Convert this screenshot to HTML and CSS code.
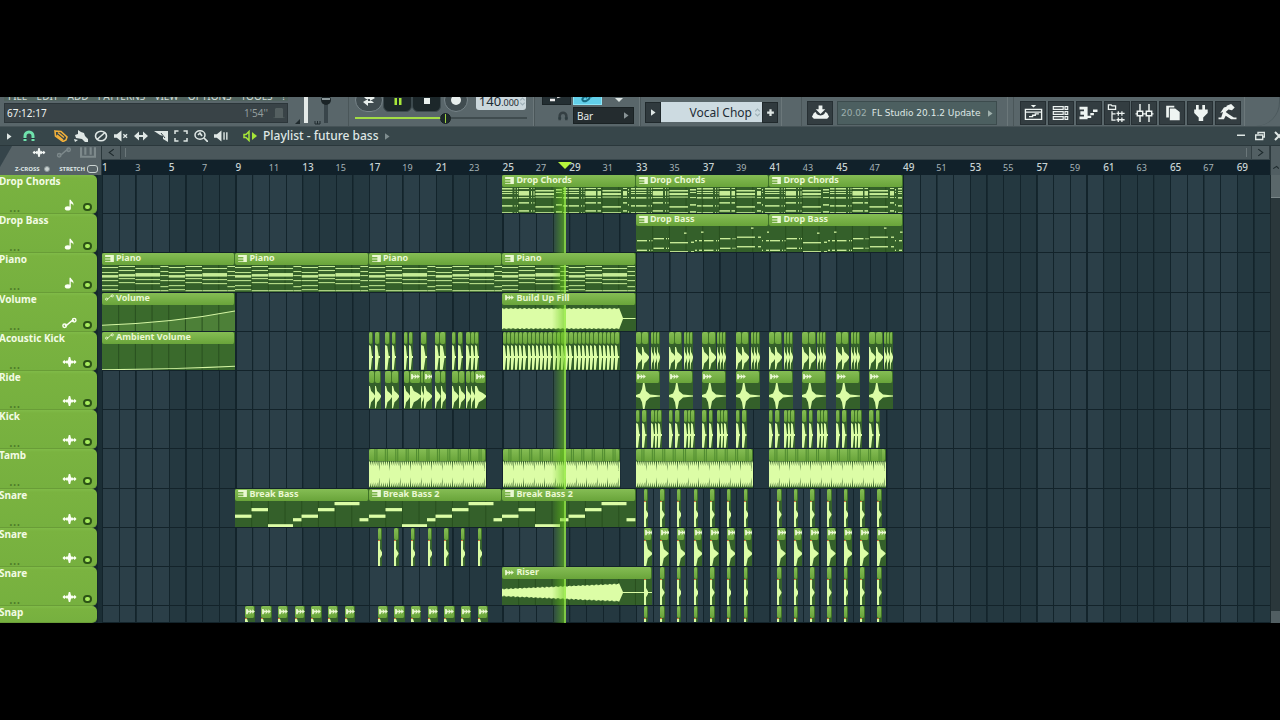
FILE: index.html
```html
<!DOCTYPE html>
<html lang="en">
<head>
<meta charset="utf-8">
<title>Playlist - future bass</title>
<link rel="stylesheet" href="styles.css">
</head>
<body>
<svg class="defs" aria-hidden="true">
  <symbol id="i-note" viewBox="0 0 14 14"><ellipse cx="5" cy="11" rx="3.500" ry="2.400"/><path d="M7 11V1h1.500c.3 2 4 3 3 7-.3-1.700-1.500-2.600-3-2.800V11z"/></symbol>
  <symbol id="i-wave" viewBox="0 0 14 12"><path d="M0 6l1.800-2L3.300 5.500 4.500 4l.8 1L6.300 1h1.400l1 4 .8-1 1.200 1.500L12.200 4 14 6l-1.800 2-1.500-1.500L9.500 8l-.8-1-1 4H6.300l-1-4-.8 1-1.200-1.500L1.800 8z"/></symbol>
  <symbol id="i-auto" viewBox="0 0 16 12"><path d="M3 9C7 9 8 3 13 3" fill="none" stroke="currentColor" stroke-width="1.600"/><circle cx="2.800" cy="9" r="1.900" fill="none" stroke="currentColor" stroke-width="1.500"/><circle cx="13" cy="3" r="1.900" fill="none" stroke="currentColor" stroke-width="1.500"/></symbol>
  <symbol id="i-piano" viewBox="0 0 10 8"><path d="M0 0h10v8H0V7h6V5.200H0V4h6V2.400H0z"/></symbol>
  <symbol id="i-hit" viewBox="0 0 10 8"><path d="M0 1h1.500L3 3.300h1V1L6.500 3.300H7V1.500L10 4 7 6.500V4.700h-.5L4 7V4.700H3L1.500 7H0z"/></symbol>
  <symbol id="i-magnet" viewBox="0 0 14 12"><path d="M3 11V6a4 4 0 0 1 8 0v5" fill="none" stroke="currentColor" stroke-width="3"/><path d="M1 8.500h4M9 8.500h4" stroke="#26383c" stroke-width="1"/></symbol>
  <symbol id="i-right" viewBox="0 0 6 8"><path d="M0 0l5.500 4L0 8z"/></symbol>
</svg>

<div class="studio">
  <header class="toolbar">
    <section class="panel main-panel">
      <nav class="menu"><a href="#">FILE</a><a href="#">EDIT</a><a href="#">ADD</a><a href="#">PATTERNS</a><a href="#">VIEW</a><a href="#">OPTIONS</a><a href="#">TOOLS</a><a href="#">?</a></nav>
      <div class="clock"><output>67:12:17</output><span class="memory">1'54''</span><svg class="chip" viewBox="0 0 12 12"><path d="M2 1h8v9h2v1H0v-1h2zM4 2v8M6 2v8M8 2v8" stroke="#3b4648"/></svg></div>
    </section>

    <section class="faders">
      <svg class="fader" viewBox="0 0 60 30"><path d="M16 0h4v26h-4z" fill="#e4eae8"/><path d="M36 0h4v26h-4z" fill="#39454a"/><circle cx="38" cy="3" r="5" fill="#1b2427"/><path d="M34 2h8" stroke="#8c999c" stroke-width="2"/><path d="M12 27H7l5-5z" fill="#202b2e"/><path d="M27 24v3h5v-3M29.500 24v3" fill="none" stroke="#202b2e"/></svg>
    </section>

    <section class="panel transport">
      <div class="transport-row">
        <button class="round" aria-label="Loop"><svg viewBox="0 0 16 16"><path d="M3 5h6V2l5 4-5 3V7H5zM13 11H7v3l-5-4 5-3v2h4z"/></svg></button>
        <button class="square pause" aria-label="Pause"><svg viewBox="0 0 16 16"><path d="M4.500 6h2.500v7H4.500zM9 6h2.500v7H9z"/></svg></button>
        <button class="square" aria-label="Stop"><svg viewBox="0 0 16 16"><path d="M5 6h6v6H5z"/></svg></button>
        <button class="round record" aria-label="Record"><svg viewBox="0 0 16 16"><circle cx="8" cy="8" r="5"/></svg></button>
        <output class="tempo">140<small>.000</small><svg class="step" viewBox="0 0 4 8"><path d="M0 3l2-2 2 2M0 5l2 2 2-2"/></svg></output>
      </div>
      <input class="position" type="range" min="0" max="100" value="53" aria-label="Song position">
    </section>

    <section class="panel snap">
      <div class="snap-row">
        <button class="dark" aria-label="Slide"><svg viewBox="0 0 16 10"><path d="M1 8h5M8 5l6-2" fill="none" stroke="#eee" stroke-width="2.500"/></svg></button>
        <button class="link" aria-label="Link"><svg viewBox="0 0 16 12"><path d="M7 7C5 5 8 2 10 1s5 1 3 3l-2 2M9 5c2 2-1 4-3 5s-5-1-3-3l2-2" fill="none" stroke="#176d83" stroke-width="2"/></svg></button>
        <svg class="drop" viewBox="0 0 8 6"><path d="M0 1h8L4 5z"/></svg>
      </div>
      <div class="snap-row low">
        <svg class="magnet-dim"><use href="#i-magnet"/></svg>
        <label class="select-box"><select aria-label="Snap to"><option>Bar</option></select><svg><use href="#i-right"/></svg></label>
      </div>
    </section>

    <section class="panel pattern">
      <button class="key" aria-label="Patterns"><svg class="tiny"><use href="#i-right"/></svg></button>
      <output class="pattern-name">Vocal Chop<svg class="step" viewBox="0 0 4 8"><path d="M0 3l2-2 2 2M0 5l2 2 2-2"/></svg></output>
      <button class="key" aria-label="Add pattern"><svg class="plus" viewBox="0 0 8 8"><path d="M3 1h2v2h2v2H5v2H3V5H1V3h2z"/></svg></button>
    </section>

    <section class="panel news">
      <button class="tool" aria-label="Download"><svg viewBox="0 0 20 18"><path d="M8 1h4v4h3l-5 5-5-5h3zM3 9l2-1 1 2c2 2 6 2 8 0l1-2 2 1 2 4-2 2H3l-2-2z"/></svg></button>
      <a class="news-item" href="#"><span>20.02</span>FL Studio 20.1.2 Update<svg class="tiny"><use href="#i-right"/></svg></a>
    </section>

    <section class="panel windows">
      <button class="tool" aria-label="Playlist"><svg viewBox="0 0 20 20"><path d="M7 1h6l-3 3z"/><path d="M1 6h18v11H1zM1 9h18M5 14h4v-1.500h3V11h4" fill="none" stroke="currentColor" stroke-width="1.500"/></svg></button>
      <button class="tool" aria-label="Channel rack"><svg viewBox="0 0 20 20"><path d="M2 3h11v3H2zM2 8.500h11v3H2zM2 14h11v3H2zM15 3h3v3h-3zM15 8.500h3v3h-3zM15 14h3v3h-3z" fill="none" stroke="currentColor" stroke-width="1.300"/></svg></button>
      <button class="tool" aria-label="Piano roll"><svg viewBox="0 0 20 20"><path d="M0 3h9v14H0v-3h5v-2H1V8h4V6H0zM9 13h4v2.500H9zM12 10h4v2.500h-4zM15 6h5v3h-5z"/></svg></button>
      <button class="tool" aria-label="Browser"><svg viewBox="0 0 20 20"><path d="M1 1h3l1 1h4v4H1zM5 8v10h4M5 11h4M12 8v5M12 15v5M10 10.500h9M10 17.500h9M16 8v5M16 15v5" fill="none" stroke="currentColor" stroke-width="1.400"/></svg></button>
      <button class="tool" aria-label="Mixer"><svg viewBox="0 0 20 20"><path d="M5 0v8M5 13v7M15 0v8M15 13v7M2 8h6v5H2zM12 8h6v5h-6zM0 11h2M8 11h4M18 11h2" fill="none" stroke="currentColor" stroke-width="1.600"/></svg></button>
      <button class="tool" aria-label="Picker"><svg viewBox="0 0 20 20"><path d="M3 2h9v2H6v11H3zM7 5h6l5 4v9H7z"/></svg></button>
      <button class="tool" aria-label="Plugins"><svg viewBox="0 0 20 20"><path d="M5 1h3v5h4V1h3v5h3v4l-5 5v4H8v-4l-5-5V6h2z"/></svg></button>
      <button class="tool" aria-label="Tempo tapper"><svg viewBox="0 0 20 20"><path d="M9 2l5-2 4 4-3 3-4-1-3 3 3 2 6 4h3v2h-6l-6-4-2 4H0v-2h3l2-6-3 1 4-6 3-1z"/></svg></button>
    </section>
    <div class="bar-end"></div>
  </header>

  <div class="titlebar">
    <button class="ico menu-arrow" aria-label="Menu"><svg class="tiny"><use href="#i-right"/></svg></button>
    <button class="ico magnet" aria-label="Snap"><svg><use href="#i-magnet"/></svg></button>
    <div class="edit-tools">
      <button class="ico draw" aria-label="Draw"><svg viewBox="0 0 14 12"><path d="M1 1l6 .5 6 5.500-1 3-3 1.500L1.500 6zM4 2.500l6 5M3 5l6 5" fill="none" stroke="currentColor" stroke-width="1.600"/></svg></button>
      <button class="ico" aria-label="Paint"><svg viewBox="0 0 14 12"><path d="M4 0l3 2 3 1 1 3 3 3v3h-3L8 9 2 8l-1-3 3-1zM0 9l4 1-3 2z"/></svg></button>
      <button class="ico" aria-label="Delete"><svg viewBox="0 0 14 12"><ellipse cx="7" cy="6" rx="5.500" ry="4.800" fill="none" stroke="currentColor" stroke-width="1.600"/><path d="M3 9.500l8-7" stroke="currentColor" stroke-width="1.600"/></svg></button>
      <button class="ico" aria-label="Mute"><svg viewBox="0 0 15 12"><path d="M0 4h3l5-4v12L3 8H0z"/><path d="M10 4l4 4M14 4l-4 4" stroke="currentColor" stroke-width="1.500"/></svg></button>
      <button class="ico" aria-label="Slip"><svg viewBox="0 0 14 12"><path d="M0 6l5-4.500V5h4V1.500L14 6l-5 4.500V7H5v3.500z"/></svg></button>
      <button class="ico" aria-label="Slice"><svg viewBox="0 0 14 12"><path d="M0 1h14v11L9 9V6L6 5z"/><path d="M7 3l4 5" stroke="#38474b"/></svg></button>
      <button class="ico" aria-label="Select"><svg viewBox="0 0 14 12"><path d="M1 4V1h3.500M9.500 1H13v3M13 8v3H9.500M4.500 11H1V8" fill="none" stroke="currentColor" stroke-width="1.500"/></svg></button>
      <button class="ico" aria-label="Zoom"><svg viewBox="0 0 14 12"><ellipse cx="6" cy="5" rx="5" ry="4.200" fill="none" stroke="currentColor" stroke-width="1.500"/><path d="M10 8l4 4M4 5l2-2 2 3" fill="none" stroke="currentColor" stroke-width="1.700"/></svg></button>
      <button class="ico" aria-label="Play selected"><svg viewBox="0 0 15 12"><path d="M0 4h3l5-4v12L3 8H0zM10 2h1.500v8H10zM13 2h1.500v8H13z"/></svg></button>
    </div>
    <button class="ico live" aria-label="Playlist options"><svg viewBox="0 0 14 12"><path d="M6 1.500v9L3 7.500H1v-3h2z" fill="none" stroke="currentColor" stroke-width="1.500"/><path d="M9 2l5 4-5 4z"/></svg></button>
    <h1>Playlist - future bass</h1>
    <svg class="tiny crumb"><use href="#i-right"/></svg>
    <div class="window-controls">
      <button class="ico" aria-label="Minimise"><svg viewBox="0 0 10 10"><path d="M1 3.500h8v1.500H1z"/></svg></button>
      <button class="ico" aria-label="Restore"><svg viewBox="0 0 10 10"><path d="M3 3V1.500h6.500V6H8M.7 4h7v4.500h-7z" fill="none" stroke="currentColor" stroke-width="1.400"/></svg></button>
      <button class="ico" aria-label="Close"><svg viewBox="0 0 10 10"><path d="M1 1l8 8M9 1l-8 8" stroke="currentColor" stroke-width="2"/></svg></button>
    </div>
  </div>

  <main class="playlist">
    <div class="corner">
      <div class="modes">
        <svg class="mode on"><use href="#i-wave"/></svg>
        <svg class="mode"><use href="#i-auto"/></svg>
        <svg class="mode" viewBox="0 0 15 10"><path d="M1 0v9h13V0M5 0v7M10 0v7" fill="none" stroke="currentColor" stroke-width="2"/></svg>
      </div>
      <div class="options">
        <label>Z-CROSS<input type="radio"></label>
        <label>STRETCH<input type="checkbox"></label>
      </div>
    </div>
    <div class="hscroll">
      <button aria-label="Scroll left"><svg viewBox="0 0 6 8"><path d="M5 1L1 4l4 3"/></svg></button>
      <div class="hthumb"></div>
      <button aria-label="Scroll right"><svg viewBox="0 0 6 8"><path d="M1 1l4 3-4 3"/></svg></button>
    </div>
    <div class="vtop"></div>
    <div class="ruler" id="ruler"></div>
    <button class="vup" aria-label="Scroll up"><svg viewBox="0 0 6 8"><path d="M1 5l3-2 2 2"/></svg></button>
    <div class="tracks" id="tracks"></div>
    <div class="lanes" id="lanes"></div>
    <div class="vscroll"><div class="vthumb"></div><button aria-label="Scroll down"></button></div>
  </main>
</div>
<script src="playlist.js"></script>
</body>
</html>
```

FILE: styles.css
```css
* { box-sizing: border-box; }

body {
  margin: 0;
  height: 100vh;
  padding: 97px 0;
  background: #000;
  overflow: hidden;
  font-family: "Noto Sans", "Open Sans", sans-serif;
  color: #dfe7e5;
}

button {
  border: 0;
  padding: 0;
  margin: 0;
  background: none;
  color: inherit;
  font: inherit;
  display: flex;
  align-items: center;
  justify-content: center;
}

a { color: inherit; text-decoration: none; }
svg { display: block; fill: currentColor; }
.defs { position: absolute; width: 0; height: 0; }

.studio {
  height: 100%;
  display: flex;
  flex-direction: column;
  overflow: hidden;
  background: #35444a;
}

/* Toolbar */
.toolbar {
  flex: none;
  height: 30px;
  display: flex;
  overflow: hidden;
  background: #59666a;
  border-bottom: 1px solid #465357;
}

.panel { flex: none; border-left: 1px solid #4a5659; border-right: 1px solid #6b777a; }

.main-panel {
  width: 288px;
  padding: 0 0 3px 4px;
  display: flex;
  flex-direction: column;
  justify-content: flex-end;
  gap: 2px;
  border: 0;
}

.menu {
  flex: none;
  display: flex;
  justify-content: space-between;
  padding: 0 2px 0 4px;
  background: #51645f;
  font-size: 10px;
  line-height: 10px;
  color: #cfdad6;
}

.clock {
  flex: none;
  height: 20px;
  display: flex;
  align-items: center;
  gap: 5px;
  padding: 0 2px;
  background: #394347;
  border: 1px solid #2c363a;
  font-size: 10px;
}
.clock output { flex: 1; color: #eef3f1; }
.memory { color: #929c9d; }
.chip { width: 12px; height: 12px; color: #6e7879; }

.faders { flex: none; width: 60px; }
.fader { width: 60px; height: 30px; }

.transport {
  width: 186px;
  padding: 0 6px 2px;
  display: flex;
  flex-direction: column;
  justify-content: flex-end;
}
.transport-row { flex: none; display: flex; align-items: flex-end; height: 24px; padding-right: 1px; }
.round, .square { width: 28px; height: 24px; background: #2d383c; border: 1px solid #78858a; color: #e8efed; }
.round { border-radius: 12px; background: #404c50; }
.square { width: 29px; background: #1c272a; border-color: #3c494d; border-radius: 0 0 6px 6px; }
.round svg, .square svg { width: 16px; height: 16px; }
.record { width: 24px; margin-left: 3px; }
.pause { color: #a7e83a; }
.tempo {
  display: flex;
  align-items: center;
  height: 18px;
  margin: 0 0 2px auto;
  padding: 0 1px 0 3px;
  background: #cbd7dc;
  border-radius: 3px;
  color: #1c2b33;
  font-size: 13px;
  line-height: 16px;
}
.tempo small { font-size: 9px; padding: 3px 1px 0 0; }
.step { width: 5px; height: 9px; fill: none; stroke: #9eb0b7; }

.position {
  flex: none;
  appearance: none;
  width: 100%;
  height: 12px;
  margin: 0;
  background: linear-gradient(90deg, #a2dd45 52%, #3f4b4e 52%) center / 100% 2px no-repeat;
}
.position::-webkit-slider-thumb {
  appearance: none;
  width: 11px;
  height: 11px;
  border-radius: 6px;
  border: 1px solid #151e20;
  background: linear-gradient(90deg, #1d282a 4px, #9bd23e 4px, #9bd23e 5px, #1d282a 5px);
}

.snap {
  width: 106px;
  padding: 0 5px 2px 7px;
  display: flex;
  flex-direction: column;
  justify-content: flex-end;
  gap: 2px;
}
.snap-row { flex: none; display: flex; align-items: center; gap: 2px; }
.snap-row.low { gap: 4px; padding-left: 15px; }
.dark, .link { width: 29px; height: 16px; background: #242f33; border: 1px solid #1b2427; }
.link { background: #62cfe9; border-color: #8de7f8; }
.dark svg, .link svg { width: 16px; height: 12px; }
.drop { width: 8px; height: 6px; margin: 6px 0 0 11px; }
.magnet-dim { width: 12px; height: 10px; color: #343f43; }
.select-box {
  flex: 1;
  height: 17px;
  display: flex;
  align-items: center;
  padding: 0 4px 0 3px;
  background: #242c2f;
  border: 1px solid #1a2224;
  color: #889395;
}
.select-box select {
  flex: 1;
  appearance: none;
  border: 0;
  padding: 0;
  background: none;
  color: #e6edeb;
  font: 10px/14px "Noto Sans", sans-serif;
}
.select-box svg { width: 5px; height: 7px; }

.tiny { width: 5px; height: 7px; }

.pattern { width: 142px; padding: 5px 3px 0 4px; display: flex; align-items: flex-start; }
.key { width: 16px; height: 21px; background: #303a3e; border: 1px solid #20292c; }
.plus { width: 9px; height: 9px; }
.pattern-name {
  flex: 1;
  height: 20px;
  display: flex;
  align-items: center;
  justify-content: flex-end;
  gap: 3px;
  padding-right: 2px;
  background: #cddbe1;
  color: #1e2c35;
  font-size: 12px;
}

.news { width: 207px; margin-left: 19px; padding: 4px 10px 0 5px; display: flex; align-items: flex-start; gap: 4px; }
.tool { width: 26px; height: 24px; background: #333d41; border: 1px solid #262f33; color: #eef4f2; }
.tool svg { width: 19px; height: 18px; }
.news-item {
  flex: 1;
  height: 24px;
  display: flex;
  align-items: center;
  gap: 5px;
  padding: 0 3px;
  background: #4c5f60;
  border: 1px solid #3c4b4d;
  font-family: "DejaVu Sans", "Noto Sans", sans-serif;
  font-size: 9px;
  white-space: nowrap;
}
.news-item span { color: #9dafae; }
.news-item .tiny { margin-left: auto; color: #9fb0ad; }

.windows { width: 232px; margin-left: 5px; padding: 4px 3px 0 6px; display: flex; justify-content: space-between; align-items: flex-start; }
.bar-end { flex: 1; border-bottom-right-radius: 24px; border-right: 1px solid #4b585c; }

/* Title bar */
.titlebar {
  flex: none;
  height: 19px;
  display: flex;
  align-items: center;
  padding-left: 7px;
  background: #37464a;
  border-bottom: 1px solid #2a373b;
}
.ico { width: 14px; height: 14px; }
.ico svg { width: 14px; height: 12px; }
.ico .tiny, .tiny { width: 5px; height: 7px; }
.menu-arrow { width: 5px; }
.magnet { margin-left: 10px; color: #6fe2ac; }
.edit-tools { display: flex; gap: 6px; margin-left: 18px; }
.draw { color: #f2b03a; }
.live { margin-left: 15px; color: #a6e638; }
.titlebar h1 { margin: 0 6px; font-size: 12px; line-height: 16px; font-weight: 500; }
.crumb { color: #7f8d8f; }
.window-controls { display: flex; align-items: center; gap: 9px; margin: 0 -4px 0 auto; }
.window-controls .ico, .window-controls svg { width: 10px; height: 10px; }

/* Playlist */
.playlist {
  flex: 1;
  min-height: 0;
  display: grid;
  grid-template-columns: 102px 1fr 10px;
  grid-template-rows: 14px 15px minmax(0, 1fr);
}

.corner {
  grid-row: span 2;
  display: flex;
  flex-direction: column;
  justify-content: space-between;
  padding: 1px 3px 1px 15px;
  background: linear-gradient(120deg, #35444a 10px, #566266 11px);
  border-right: 1px solid #2b383c;
}
.modes { display: flex; gap: 8px; padding-left: 15px; color: #7d898b; }
.mode { width: 16px; height: 11px; }
.mode.on { width: 18px; color: #f3f7f5; }
.options { display: flex; justify-content: space-between; align-items: center; }
.options label { display: flex; align-items: center; gap: 2px; font-size: 6px; line-height: 10px; font-weight: 700; }
.options input { appearance: none; margin: 0; border: 1px solid #cbd4d2; }
.options input[type="radio"] { width: 6px; height: 6px; margin-left: 2px; border-radius: 3px; border-color: #8a9698; background: #cbd4d2; }
.options input[type="checkbox"] { width: 11px; height: 8px; border-radius: 3px; }

.hscroll { display: flex; background: #4a575b; border-bottom: 1px solid #37454a; }
.hscroll button { width: 19px; border-right: 1px solid #333f43; background: #525f63; }
.hscroll button:last-child { border-left: 1px solid #333f43; }
.hscroll svg, .vup svg { width: 7px; height: 9px; fill: none; stroke: #1d292c; stroke-width: 1; }
.hthumb { flex: 1; margin: 2px 4px; border-left: 1px solid #6b777a; border-right: 1px solid #6b777a; }
.vtop { background: #515e62; border-left: 1px solid #2b383c; }
.vup { background: #515e62; border-left: 1px solid #2b383c; }

.ruler {
  position: relative;
  display: grid;
  grid-template-columns: repeat(35, minmax(0, 1fr));
  background: #11212a;
  color: #a7b4b8;
  font-size: 9px;
  line-height: 15px;
}
.ruler .strong { font-size: 10px; font-weight: 500; color: #c8d3d4; }
.marker { position: absolute; bottom: 6px; width: 14px; height: 7px; margin-left: -7px; color: #b6f53c; }

.tracks, .lanes {
  min-height: 0;
  display: grid;
  grid-template-columns: minmax(0, 1fr);
  grid-template-rows: repeat(11, minmax(0, 7fr)) minmax(0, 3fr);
  overflow: hidden;
}
.tracks { padding-right: 5px; background: linear-gradient(90deg, #14262c 98px, #1b2e35 98px); }
.track {
  overflow: hidden;
  display: grid;
  grid-template-columns: 1fr 16px 12px;
  grid-template-rows: 12px 26px;
  column-gap: 4px;
  padding-right: 3px;
  background: linear-gradient(#80bb48, #7ab340 3px, #76b03f);
  border-bottom: 1px solid #699d37;
  border-radius: 0 5px 5px 0;
}
.track h2 { grid-column: span 3; margin: 0 0 0 -1px; font-size: 10px; line-height: 12px; font-weight: 700; color: #f2fbe4; white-space: nowrap; }
.track .dots { align-self: end; padding-left: 9px; font-size: 14px; line-height: 12px; color: #4b7a27; }
.track svg { align-self: end; width: 15px; height: 12px; margin-bottom: 2px; color: #fbfff4; }
.led { align-self: end; width: 9px; height: 8px; margin: 0 0 2px 1px; border: 2px solid #2c5316; border-radius: 4px; background: #a8ec5e; }
.track:last-child .dots, .track:last-child svg, .track:last-child .led { display: none; }

.lanes {
  position: relative;
  background:
    repeating-linear-gradient(90deg, #13242b 0, #13242b .09%, transparent .12%, transparent 1.4286%),
    repeating-linear-gradient(90deg, #2b3f48 0, #2b3f48 5.7143%, #243840 5.7143%, #243840 11.4286%);
}
.lane { position: relative; border-bottom: 1px solid #13232a; overflow: hidden; }

.clip { position: absolute; top: 0; bottom: 0; min-height: 38px; display: flex; flex-direction: column; background: #34602a; overflow: hidden; }
.clip header {
  position: relative;
  flex: none;
  height: 12px;
  display: flex;
  align-items: center;
  gap: 2px;
  padding: 0 0 2px 3px;
  background: linear-gradient(#85bd54, #69a43a);
  border-right: 1px solid #3f7327;
  border-radius: 2px;
  color: #eaf8d2;
  font-size: 9px;
  line-height: 10px;
  font-weight: 700;
  white-space: nowrap;
}
.clip header svg { flex: none; width: 9px; height: 7px; }
.clip:not(.hit) header { z-index: 1; }
.hit header { padding-left: 1px; }
.clip header.strip { padding: 0; }
.clip header.strip svg { width: 100%; height: 12px; }
.clip .shape { flex: 1; width: 100%; min-height: 0; color: #dcfda6; }
.clip.flat { background: #3a6a2c; }
.notes { fill: #c6ec96; }
.under { fill: #4d8038; }
.line { fill: none; stroke: #d5f6a4; stroke-width: 1; }
.peak { fill: #c9703c; }
.grid { stroke: #29501f; stroke-width: 1; }
.cut { stroke: #4f8a2f; stroke-width: 1; }

.playhead {
  position: absolute;
  top: 0;
  bottom: 0;
  width: 14px;
  margin-left: -13px;
  background: linear-gradient(90deg, rgba(100, 200, 20, 0), rgba(100, 200, 20, .55));
  border-right: 2px solid rgba(150, 235, 70, .8);
}

.vscroll { display: flex; flex-direction: column; justify-content: space-between; background: #2a373b; border-left: 1px solid #1b282c; }
.vthumb { height: 23px; background: #5a676a; border-bottom: 1px solid #7a8688; }
.vscroll button { height: 12px; background: #515e62; }
```

FILE: playlist.js
```js
// Timeline length in ticks; one bar is TICKS / 70.
const TICKS = 1168;
const BAR = TICKS / 70;
const BODY = 26;

const pct = (t) => (t / TICKS) * 100 + '%';
const icon = (name) => `<svg><use href="#i-${name}"/></svg>`;
const rect = (x, y, w, h, cls = '') => `<rect class="${cls}" x="${x}" y="${y}" width="${w}" height="${h}"/>`;
const shape = (w, inner) => `<svg class="shape" viewBox="0 0 ${w} ${BODY}" preserveAspectRatio="none">${inner}</svg>`;

function clip(x, w, body, { label = '', ico = '', cls = '', strip = '' } = {}) {
  const head = strip || `<header>${ico ? icon(ico) : ''}${label}</header>`;
  return `<div class="clip ${cls}" style="left:${pct(x)};width:${pct(w)}">${head}${shape(w, body)}</div>`;
}

function barLines(w) {
  let s = '';
  for (let x = BAR; x < w - 1; x += BAR) s += `<path class="grid" d="M${x} 0V${BODY}"/>`;
  return s;
}

/* Note patterns: [y, thickness] rows for each span of the clip */
const spans = [[0, 16.2], [16.7, 33], [33.4, 58], [58.4, 66.4], [66.7, 83], [83.4, 100], [100.4, 125], [125.4, 133]];
const rows = [
  [[2, 1], [7, 1], [10, 2.5], [15, 1], [20, 1], [24, 1]],
  [[1, 1], [5, 1], [9, 2.5], [13, 1], [17, 1], [25, 1]],
  [[3, 1], [8, 3.5], [14, 1], [18, 1], [25, 1]],
  [[1, 1], [6, 1], [10, 1], [15, 1], [21, 1], [25, 1]],
];
const order = [0, 1, 2, 3, 0, 1, 2, 3];
const pianoNotes = `<g class="notes">${spans.map(([a, b], i) => rows[order[i]].map(([y, h]) => rect(a, y, b - a, h)).join('')).join('')}</g>`;

const chordRows = [
  [[1, 1.5], [4, 1], [6, 1], [10, 1.5], [18, 1.5], [25, 1]],
  [[1, 1], [4, 4.5], [10, 1], [15, 1.5], [23, 1.5]],
  [[3, 1.5], [6, 2], [9.5, 1], [19, 1.5], [25, 1]],
  [[2, 1.5], [5, 1], [10, 1], [17, 1.5], [24, 1.5]],
];
const chordSpans = [[0, 10.5, 0], [12.5, 13.5, 0], [15, 16, 0], [16.7, 27, 1], [29, 30, 1], [31.5, 32.5, 1], [33.4, 52, 2], [54, 60, 3], [61, 65.5, 0],
  [66.7, 77, 0], [79, 80, 0], [81.5, 82.5, 0], [83.4, 94, 1], [95.5, 99, 1], [100.4, 119, 2], [121, 125, 1], [126, 127, 3], [129, 133, 0]];
const chordNotes = `<g class="notes">${chordSpans.map(([a, b, k]) => chordRows[k].map(([y, h]) => rect(a, y, b - a, h)).join('')).join('')}</g>`;

const bassNotes = [[1, 11, 15], [13, 14, 15], [15.5, 16.5, 15], [17.5, 28, 13], [30, 31, 13], [32, 33, 13], [34, 52, 17], [55, 58, 16.5], [59, 61, 15],
  [63, 66, 15], [68, 77.5, 15], [80, 81, 15], [82, 83, 15], [84, 94.5, 13], [96.5, 97.5, 13], [98.5, 99.5, 13], [101, 119, 11.5], [122, 125, 11.5], [126, 127, 15], [130, 133, 15]]
  .map(([a, b, y]) => rect(a, y - 1, b - a, 1.2) + rect(a, Math.min(y + 8.5, 25), b - a, 1.2)).join('')
  + [[48, 6.5], [65, 5.5], [115, 1.5], [131, 5.5]].map(([x, y]) => rect(x, y, 2.5, 1.2)).join('');

const breakNotes = [[0, 16.5, 13.5], [16.5, 33, 7], [33, 58, 23], [58, 66.5, 17], [66.5, 83, 13.5], [83, 99.5, 7], [99.5, 124.5, 1], [124.5, 133.4, 17]]
  .map(([a, b, y]) => rect(a, y, b - a, 3.2)).join('');

/* Waveforms */
const decay = (w) => `<path d="M0 3H${w * 0.15}L${w * 0.35} 8L${w * 0.7} 10L${w} 12.5V14L${w * 0.7} 17L${w * 0.35} 19L${w * 0.15} 25H0z"/>`;
const thump = (w) => `<path d="M0 1L${w * 0.45} 2L${w * 0.75} 12H${w}V14H${w * 0.75}L${w * 0.45} 25.5H0z"/>`;
const snare = (w) => `<path d="M0 1H${Math.min(w, 3) * 0.7}L${w * 0.45} 9L${w} 13V14L${w * 0.45} 18L${Math.min(w, 3) * 0.7} 26H0z"/>${rect(0, 0, 2, 1, 'peak')}`;
const star = (w) => `<path d="M0 12L4 10.5 6 6 7 0 8.5 0 10 8 14 11.5 ${w} 12.5V13.5L14 14.5 10 18 8.5 26H7L6 19 4 15 0 14z"/>`;

function noisy(end, amp, tail) {
  let top = '', bottom = '';
  for (let x = 0; x <= end; x += 1) {
    const a = amp(x) + Math.sin(x * 2.3) * Math.sin(x * 0.9) * 0.9;
    top += `L${x} ${13.5 - a}`;
    bottom = `L${x} ${13.5 + a}` + bottom;
  }
  return `<path d="M0 13${top}L${end + 4} 13H${tail}V14H${end + 4}${bottom}z"/>`;
}

function comb(x, w) {
  let cuts = '', teeth = '';
  for (let t = 6; t < w; t += 10.5) cuts += `<path class="cut" d="M${t} 0V12M${t + 2} 0V12"/>`;
  const step = 2.1;
  for (let t = 0, i = 0; t < w - 1; t += step, i += 1) {
    const deep = i % 5 === 4 ? 10 : 5;
    teeth += `M${t} .5h1L${t + step} ${deep}V${BODY - deep}L${t + 1} 25.5H${t}z`;
  }
  const strip = `<header class="strip"><svg viewBox="0 0 ${w} 12" preserveAspectRatio="none">${cuts}</svg></header>`;
  return clip(x, w, `<path d="${teeth}"/>`, { strip, cls: 'hit' });
}

const hits = (list, draw, base = 0) => list.map(([a, b, ico]) => clip(base + a, b - a, draw(b - a), { cls: 'hit', ico })).join('');
const series = (x, n, w, draw, ico) => Array.from({ length: n }, (_, i) => clip(x + i * BAR, w, draw(w), { cls: 'hit', ico })).join('');
const groups = (list, draw) => Array.from({ length: 8 }, (_, i) => hits(list(i), draw, 533.5 + i * BAR * 2)).join('');

const P = 8 * BAR;
const at = (bar) => (bar - 1) * BAR;
const midi = (bars, label, notes) => bars.map((b) => clip(at(b), P, barLines(P) + notes, { label, ico: 'piano' })).join('');

const lanes = [
  ['Drop Chords', 'note', midi([25, 33, 41], 'Drop Chords', chordNotes)],
  ['Drop Bass', 'note', midi([33, 41], 'Drop Bass', bassNotes)],
  ['Piano', 'note', midi([1, 9, 17, 25], 'Piano', pianoNotes)],
  ['Volume', 'auto',
    clip(0, P, `<path class="under" d="M0 20Q70 18 133 6V26H0z"/>${barLines(P)}<path class="line" d="M0 20Q70 18 133 6"/>`, { label: 'Volume', ico: 'auto', cls: 'flat' })
    + clip(at(25), P, barLines(P) + noisy(117, () => 10, P), { label: 'Build Up Fill', ico: 'hit' })],
  ['Acoustic Kick', 'wave',
    clip(0, P, `${barLines(P)}<path class="line" d="M0 25.5Q70 25 133 22"/>`, { label: 'Ambient Volume', ico: 'auto', cls: 'flat' })
    + hits([[267, 271], [273, 278], [283, 288], [290, 294], [302, 306], [307, 311], [319, 325], [333, 338], [338, 344], [350, 354], [356, 361], [364, 369], [369, 373], [373, 377]], thump)
    + hits(Array.from({ length: 28 }, (_, i) => [400.5 + i * 4.18, 404.68 + i * 4.18]), thump)
    + groups(() => [[0, 6.5], [6.5, 13.5], [15, 18], [18, 21], [21, 24]], decay)],
  ['Ride', 'wave',
    hits([[267, 273], [273, 279], [283, 290], [290, 297], [302, 308], [308, 319, 'hit'], [319, 322], [322, 330, 'hit'], [333, 338.5], [338.5, 344], [350, 356.5], [356.5, 363], [364, 369], [369, 373], [373, 384, 'hit']], decay)
    + groups(() => [[0, 24, 'hit']], star)],
  ['Kick', 'wave',
    groups((i) => (i % 4 === 3 ? [[0, 4.5], [6.5, 11]] : [[0, 4.5], [6.5, 11], [15, 19], [19, 22], [22, 26]]), thump)],
  ['Tamb', 'wave', comb(267, 117) + comb(400.5, 117) + comb(533.5, 117) + comb(667, 117)],
  ['Snare', 'wave',
    midi([9], 'Break Bass', breakNotes) + midi([17, 25], 'Break Bass 2', breakNotes)
    + series(541.5, 7, 4.5, snare) + series(675, 7, 4.5, snare)],
  ['Snare', 'wave', series(275.5, 7, 4.5, snare) + series(541.5, 7, 8.5, snare, 'hit') + series(675, 7, 8.5, snare, 'hit')],
  ['Snare', 'wave',
    clip(at(25), 150, barLines(150) + noisy(117, (x) => 3.5 + x * 0.044, 150), { label: 'Riser', ico: 'hit' })
    + series(541.5, 7, 4.5, snare) + series(675, 7, 4.5, snare)],
  ['Snap', 'wave', series(142.5, 7, 10.5, snare, 'hit') + series(275.5, 7, 10.5, snare, 'hit') + series(541.5, 7, 4.5, snare) + series(675, 7, 4.5, snare)],
];

document.getElementById('tracks').innerHTML = lanes
  .map(([name, ico]) => `<div class="track"><h2>${name}</h2><span class="dots">...</span>${icon(ico)}<i class="led"></i></div>`)
  .join('');

const HEAD = 463 / TICKS * 100;
document.getElementById('lanes').innerHTML = lanes
  .map(([, , clips]) => `<div class="lane">${clips}</div>`)
  .join('') + `<div class="playhead" style="left:${HEAD}%"></div>`;

let numbers = '';
for (let n = 1; n < 71; n += 2) numbers += `<span class="${n % 4 === 1 ? 'strong' : ''}">${n}</span>`;
document.getElementById('ruler').innerHTML = numbers
  + `<svg class="marker" style="left:${HEAD}%" viewBox="0 0 14 7"><path d="M0 0h14L7 7z"/></svg>`;
```
